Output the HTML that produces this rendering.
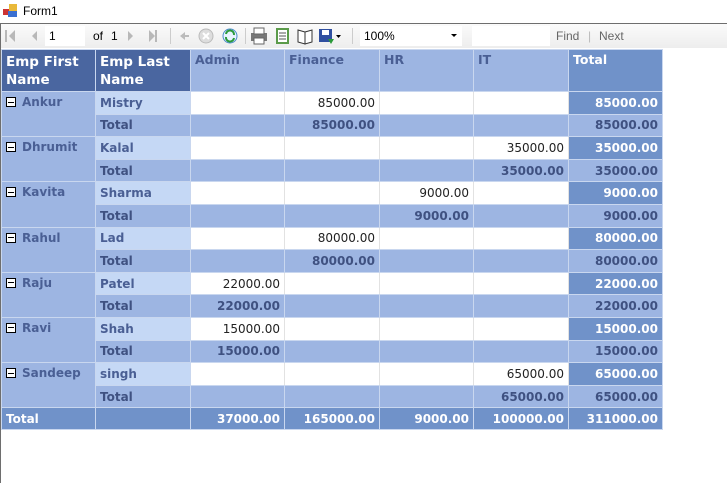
<!DOCTYPE html>
<html><head><meta charset="utf-8"><style>
body{margin:0;width:727px;height:483px;background:#fff;position:relative;overflow:hidden;font-family:Tahoma,"DejaVu Sans","Liberation Sans",sans-serif;}
.title{position:absolute;left:0;top:0;width:727px;height:23px;background:#fff;}
.title span{position:absolute;left:23px;top:4px;font:12px "Liberation Sans",sans-serif;color:#000;}
.frame{position:absolute;left:0;top:23px;width:727px;height:460px;border-top:1px solid #6e6e6e;border-left:1px solid #6e6e6e;box-sizing:border-box;}
.tb{position:absolute;left:1px;top:24px;width:726px;height:24px;background:linear-gradient(#fbfbfb,#ededed);}
.tb .t{position:absolute;font:12px "Liberation Sans",sans-serif;color:#000;top:5px;}
.box{position:absolute;background:#fff;top:2px;height:20px;}
table{position:absolute;left:1px;top:49px;border-collapse:collapse;table-layout:fixed;width:662px;font-family:"DejaVu Sans","Liberation Sans",sans-serif;}
td{border:1px solid #c9d7ef;padding:0 4px;font-size:12px;height:21.6px;vertical-align:middle;white-space:nowrap;overflow:hidden;}
th{border:1px solid #c9d7ef;text-align:left;vertical-align:top;padding:2px 4px;font-size:12.5px;height:36px;box-sizing:border-box;}
tr.h{height:41px;}
.hd{background:#4a66a0;color:#fff;font-size:13.5px;line-height:18px;padding-top:3px;}
.hc{background:#9db5e2;color:#4a5f94;}
.ht{background:#7092c9;color:#fff;}
.fn{background:#9db5e2;color:#4a5f94;font-weight:bold;vertical-align:top;padding-top:3px;}
.ln{background:#c5d8f5;color:#4a5f94;font-weight:bold;}
.sub{background:#9db5e2;color:#3f5181;font-weight:bold;}
.d{background:#fff;text-align:right;color:#222;border-color:#e2e2e2 #e2e2e2 #c9d7ef #e2e2e2;}
.sv{background:#9db5e2;text-align:right;color:#3f5181;font-weight:bold;}
.tv{background:#7092c9;color:#fff;text-align:right;font-weight:bold;}
.tsv{background:#9db5e2;color:#3f5181;text-align:right;font-weight:bold;}
.gt td{background:#7092c9;color:#fff;font-weight:bold;text-align:right;height:21px;}
.m{display:inline-block;width:8px;height:8px;border:1px solid #000;background:#fff;position:relative;margin-right:6px;vertical-align:-1px;}
.m:after{content:"";position:absolute;left:1px;top:3.5px;width:6px;height:1px;background:#000;}
</style></head><body>
<div class="title"><svg style="position:absolute;left:3px;top:4px" width="15" height="14"><rect x="0" y="5" width="6" height="6" fill="#c33"/><rect x="6" y="0" width="8" height="8" fill="#e9b93a"/><rect x="5" y="7" width="9" height="6" fill="#3a6fd0"/></svg><span>Form1</span></div>
<div class="frame"></div>
<div class="tb">
<svg style="position:absolute;left:4px;top:5px" width="160" height="14" fill="#b8b8b8"><rect x="0" y="1" width="2" height="12"/><path d="M10 1 L4 7 L10 13Z"/><path d="M32 2 L27 7 L32 12Z"/><path d="M123 2 L128 7 L123 12Z"/><path d="M144 1 L150 7 L144 13Z"/><rect x="150" y="1" width="2" height="12"/></svg>
<div class="box" style="left:44px;width:40px"></div><span class="t" style="left:48px">1</span>
<span class="t" style="left:92px">of</span><span class="t" style="left:110px">1</span>
<div style="position:absolute;left:169px;top:4px;width:1px;height:16px;background:#ccc"></div>
<svg style="position:absolute;left:176px;top:4px" width="70" height="18"><path d="M3 8 L8 4 L8 12Z" fill="#bbb"/><rect x="8" y="7" width="4" height="2" fill="#bbb"/><circle cx="29" cy="8" r="7" fill="#ddd" stroke="#bbb"/><path d="M26 5 L32 11 M32 5 L26 11" stroke="#fff" stroke-width="2"/><circle cx="53" cy="8" r="7" fill="#e8f4ff" stroke="#4a8ac9"/><path d="M49 6 A4 4 0 0 1 57 7 M57 10 A4 4 0 0 1 49 9" stroke="#2a9a3a" stroke-width="2" fill="none"/></svg>
<div style="position:absolute;left:244px;top:4px;width:1px;height:16px;background:#ccc"></div>
<svg style="position:absolute;left:249px;top:3px" width="95" height="18"><rect x="1" y="6" width="16" height="8" fill="#777"/><rect x="4" y="1" width="10" height="6" fill="#fff" stroke="#666"/><rect x="4" y="11" width="10" height="6" fill="#fff" stroke="#666"/><rect x="26" y="1" width="13" height="16" fill="#5b9b4a"/><rect x="28" y="3" width="9" height="12" fill="#fff"/><path d="M29 6h7M29 9h7M29 12h7" stroke="#555"/><path d="M48 3 L55 5 L55 17 L48 15Z M55 5 L62 3 L62 15 L55 17Z" fill="#fff" stroke="#333"/><rect x="69" y="2" width="13" height="13" fill="#2f4fa0"/><rect x="72" y="3" width="7" height="5" fill="#fff"/><path d="M78 12 L84 12 L81 17Z" fill="#2a9a3a"/><path d="M86 8 L91 8 L88.5 11Z" fill="#000"/></svg>
<div style="position:absolute;left:351px;top:4px;width:1px;height:16px;background:#ccc"></div>
<div class="box" style="left:359px;width:102px"></div><span class="t" style="left:363px">100%</span><svg style="position:absolute;left:450px;top:10px" width="6" height="4"><path d="M0 0 L6 0 L3 3Z" fill="#000"/></svg>
<div class="box" style="left:471px;width:78px"></div>
<span class="t" style="left:555px;color:#666">Find</span><span class="t" style="left:587px;color:#bbb">|</span><span class="t" style="left:598px;color:#666">Next</span>
</div>
<table>
<colgroup><col style="width:94px"><col style="width:95px"><col style="width:94px"><col style="width:95px"><col style="width:94px"><col style="width:95px"><col style="width:94px"></colgroup>
<tr class="h"><th class="hd">Emp First Name</th><th class="hd">Emp Last Name</th><th class="hc">Admin</th><th class="hc">Finance</th><th class="hc">HR</th><th class="hc">IT</th><th class="ht">Total</th></tr>
<tr><td class="fn" rowspan="2"><span class="m"></span>Ankur</td><td class="ln">Mistry</td><td class="d"></td><td class="d">85000.00</td><td class="d"></td><td class="d"></td><td class="tv">85000.00</td></tr>
<tr><td class="sub">Total</td><td class="sv"></td><td class="sv">85000.00</td><td class="sv"></td><td class="sv"></td><td class="tsv">85000.00</td></tr>
<tr><td class="fn" rowspan="2"><span class="m"></span>Dhrumit</td><td class="ln">Kalal</td><td class="d"></td><td class="d"></td><td class="d"></td><td class="d">35000.00</td><td class="tv">35000.00</td></tr>
<tr><td class="sub">Total</td><td class="sv"></td><td class="sv"></td><td class="sv"></td><td class="sv">35000.00</td><td class="tsv">35000.00</td></tr>
<tr><td class="fn" rowspan="2"><span class="m"></span>Kavita</td><td class="ln">Sharma</td><td class="d"></td><td class="d"></td><td class="d">9000.00</td><td class="d"></td><td class="tv">9000.00</td></tr>
<tr><td class="sub">Total</td><td class="sv"></td><td class="sv"></td><td class="sv">9000.00</td><td class="sv"></td><td class="tsv">9000.00</td></tr>
<tr><td class="fn" rowspan="2"><span class="m"></span>Rahul</td><td class="ln">Lad</td><td class="d"></td><td class="d">80000.00</td><td class="d"></td><td class="d"></td><td class="tv">80000.00</td></tr>
<tr><td class="sub">Total</td><td class="sv"></td><td class="sv">80000.00</td><td class="sv"></td><td class="sv"></td><td class="tsv">80000.00</td></tr>
<tr><td class="fn" rowspan="2"><span class="m"></span>Raju</td><td class="ln">Patel</td><td class="d">22000.00</td><td class="d"></td><td class="d"></td><td class="d"></td><td class="tv">22000.00</td></tr>
<tr><td class="sub">Total</td><td class="sv">22000.00</td><td class="sv"></td><td class="sv"></td><td class="sv"></td><td class="tsv">22000.00</td></tr>
<tr><td class="fn" rowspan="2"><span class="m"></span>Ravi</td><td class="ln">Shah</td><td class="d">15000.00</td><td class="d"></td><td class="d"></td><td class="d"></td><td class="tv">15000.00</td></tr>
<tr><td class="sub">Total</td><td class="sv">15000.00</td><td class="sv"></td><td class="sv"></td><td class="sv"></td><td class="tsv">15000.00</td></tr>
<tr><td class="fn" rowspan="2"><span class="m"></span>Sandeep</td><td class="ln">singh</td><td class="d"></td><td class="d"></td><td class="d"></td><td class="d">65000.00</td><td class="tv">65000.00</td></tr>
<tr><td class="sub">Total</td><td class="sv"></td><td class="sv"></td><td class="sv"></td><td class="sv">65000.00</td><td class="tsv">65000.00</td></tr>
<tr class="gt"><td style="text-align:left">Total</td><td></td><td>37000.00</td><td>165000.00</td><td>9000.00</td><td>100000.00</td><td>311000.00</td></tr>
</table>
</body></html>
